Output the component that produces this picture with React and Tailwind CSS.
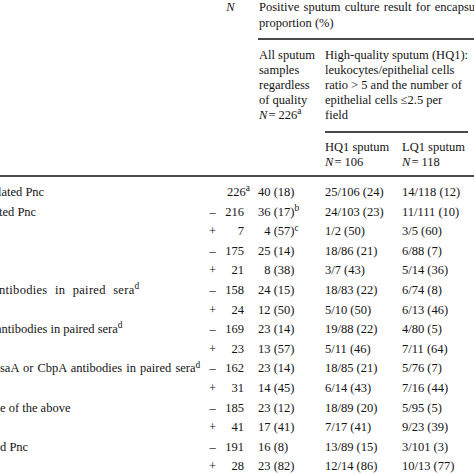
import React from 'react';

const cols = 'grid grid-cols-[205px_15px_24px_14px_67px_77px_66px_72px]';

const rows = [
  { label: 'lated Pnc', ml: 'ml-[-2px]', sign: '', n: '226', nSup: 'a', all: '40 (18)', hq: '25/106 (24)', lq: '14/118 (12)' },
  { label: 'ted Pnc', ml: 'ml-[-1px]', sign: '–', n: '216', all: '36 (17)', allSup: 'b', hq: '24/103 (23)', lq: '11/111 (10)' },
  { sign: '+', n: '7', all: '\u20074 (57)', allSup: 'c', hq: '1/2 (50)', lq: '3/5 (60)' },
  { sign: '–', n: '175', all: '25 (14)', hq: '18/86 (21)', lq: '6/88 (7)' },
  { sign: '+', n: '21', all: '\u20078 (38)', hq: '3/7 (43)', lq: '5/14 (36)' },
  { label: 'ntibodies in paired sera', ml: 'ml-[-1px] [word-spacing:4px] tracking-[0.3px]', labelSup: 'd', sign: '–', n: '158', all: '24 (15)', hq: '18/83 (22)', lq: '6/74 (8)' },
  { sign: '+', n: '24', all: '12 (50)', hq: '5/10 (50)', lq: '6/13 (46)' },
  { label: 'antibodies in paired sera', ml: 'ml-[-4px]', labelSup: 'd', sign: '–', n: '169', all: '23 (14)', hq: '19/88 (22)', lq: '4/80 (5)' },
  { sign: '+', n: '23', all: '13 (57)', hq: '5/11 (46)', lq: '7/11 (64)' },
  { label: 'saA or CbpA antibodies in paired sera', ml: 'ml-[0px] [word-spacing:1px]', labelSup: 'd', sign: '–', n: '162', all: '23 (14)', hq: '18/85 (21)', lq: '5/76 (7)' },
  { sign: '+', n: '31', all: '14 (45)', hq: '6/14 (43)', lq: '7/16 (44)' },
  { label: 'e of the above', ml: 'ml-[0px]', sign: '–', n: '185', all: '23 (12)', hq: '18/89 (20)', lq: '5/95 (5)' },
  { sign: '+', n: '41', all: '17 (41)', hq: '7/17 (41)', lq: '9/23 (39)' },
  { label: 'd Pnc', ml: 'ml-[0px]', sign: '–', n: '191', all: '16 (8)', hq: '13/89 (15)', lq: '3/101 (3)' },
  { sign: '+', n: '28', all: '23 (82)', hq: '12/14 (86)', lq: '10/13 (77)' },
];

const App = () => {
  return (
    <div className="w-[474px] h-[474px] overflow-hidden bg-white">
      <div className="w-[540px] font-['Liberation_Serif','Times_New_Roman',serif] text-[12.5px] text-[#141414]">
        {/* header */}
        <div className={cols}>
          <div className="col-start-3 text-center pr-[3px] italic leading-[15.5px]">N</div>
          <div className="col-start-5 col-span-4 border-b-2 border-[#4a4a4a] pb-[7px] pl-[1px] leading-[15.5px] whitespace-nowrap">
            <span className="[word-spacing:1.2px]">Positive sputum culture result for encapsulated Pnc,</span>
            <br />
            proportion (%)
          </div>

          <div className="col-start-5 row-span-2 pt-[7.5px] pl-[1px] leading-[15px] whitespace-nowrap">
            All sputum
            <br />
            samples
            <br />
            regardless
            <br />
            of quality
            <br />
            <span className="italic">N</span>{'\u200A= 226'}
            <sup>a</sup>
          </div>
          <div className="col-start-6 col-span-2 border-b-2 border-[#4a4a4a] pt-[7.5px] pb-[8.5px] leading-[15px] whitespace-nowrap">
            High-quality sputum (HQ1):
            <br />
            leukocytes/epithelial cells
            <br />
            ratio &gt; 5 and the number of
            <br />
            epithelial cells ≤2.5 per
            <br />
            field
          </div>

          <div className="col-start-6 pt-[6.5px] pb-[5.5px] leading-[15px] whitespace-nowrap">
            HQ1 sputum
            <br />
            <span className="italic">N</span>{'\u200A= 106'}
          </div>
          <div className="col-start-7 pt-[6.5px] pb-[5.5px] leading-[15px] whitespace-nowrap">
            LQ1 sputum
            <br />
            <span className="italic">N</span>{'\u200A= 118'}
          </div>
        </div>

        {/* body */}
        <div className="border-t-2 border-[#4a4a4a] pt-[6px]">
          {rows.map((r, i) => (
            <div key={i} className={`${cols} h-[19.6px] leading-[19.6px] whitespace-nowrap`}>
              <div className="overflow-visible">
                {r.label && (
                  <span className={`inline-block ${r.ml}`}>
                    {r.label}
                    {r.labelSup && <sup>{r.labelSup}</sup>}
                  </span>
                )}
              </div>
              <div className="text-center">{r.sign}</div>
              <div className="text-right">
                {r.n}
                {r.nSup && <sup className="mr-[-6px]">{r.nSup}</sup>}
              </div>
              <div />
              <div>
                {r.all}
                {r.allSup && <sup>{r.allSup}</sup>}
              </div>
              <div>{r.hq}</div>
              <div>{r.lq}</div>
              <div />
            </div>
          ))}
        </div>
      </div>
    </div>
  );
};

export default App;
